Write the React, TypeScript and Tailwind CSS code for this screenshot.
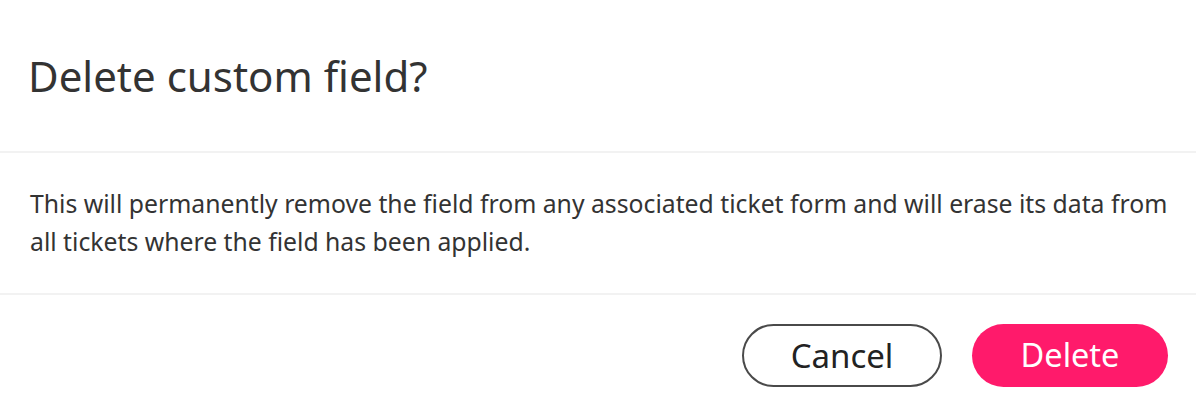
export default function App() {
  return (
    <div
      className="flex h-[416px] w-[1196px] flex-col bg-white text-[#333333] [font-variant-ligatures:none]"
      style={{ fontFamily: "'Noto Sans', Lato, sans-serif" }}
    >
      <header className="flex h-[151px] items-center px-[28px]">
        <h2 className="text-[42px] leading-none font-normal">Delete custom field?</h2>
      </header>
      <div className="h-[2px] bg-[#f2f2f2]" />
      <div className="flex h-[140px] items-center pl-[30px] pr-[20px]">
        <p className="text-[24.75px] leading-[38px]">
          This will permanently remove the field from any associated ticket form and will erase its data from all
          tickets where the field has been applied.
        </p>
      </div>
      <div className="h-[2px] bg-[#f2f2f2]" />
      <footer className="flex flex-1 items-center justify-end gap-[30px] pr-[28px]">
        <button className="h-[63px] w-[200px] rounded-full border-2 border-[#4a4a4a] text-[33px] text-[#222222]">
          Cancel
        </button>
        <button className="h-[63px] w-[196px] rounded-full bg-[#ff1a6b] text-[32.5px] text-white">
          Delete
        </button>
      </footer>
    </div>
  );
}
